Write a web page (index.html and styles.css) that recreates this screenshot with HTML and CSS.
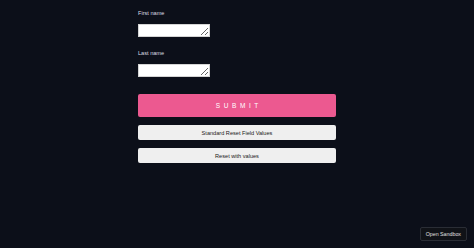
FILE: index.html
```html
<!DOCTYPE html>
<html>
<head>
<meta charset="utf-8">
<link rel="stylesheet" href="styles.css">
</head>
<body>
<div class="page">
  <form class="form">
    <label class="field">
      <span class="label">First name</span>
      <textarea class="input"></textarea>
    </label>
    <label class="field">
      <span class="label">Last name</span>
      <textarea class="input"></textarea>
    </label>
    <button type="button" class="submit">SUBMIT</button>
    <button type="button" class="btn">Standard Reset Field Values</button>
    <button type="button" class="btn">Reset with values</button>
  </form>
</div>
<button type="button" class="sandbox">Open Sandbox</button>
</body>
</html>
```
FILE: styles.css
```css
html, body {
  margin: 0;
  padding: 0;
  background: #0c0f19;
  width: 474px;
  height: 248px;
  overflow: hidden;
  font-family: "Liberation Sans", Arial, sans-serif;
}
.page {
  display: flex;
  justify-content: flex-start;
  padding-left: 138px;
}
.form {
  width: 198px;
  display: flex;
  flex-direction: column;
  padding-top: 9px;
}
.field {
  display: flex;
  flex-direction: column;
  align-items: flex-start;
}
.label {
  color: #dcdce2;
  font-size: 5.6px;
  line-height: 8px;
  margin-bottom: 7px;
}
.input {
  width: 72px;
  height: 13px;
  box-sizing: border-box;
  margin: 0 0 12px 0;
  padding: 0;
  border: 1px solid #d4d4d4;
  background: #fff;
  font-size: 6px;
}
.submit {
  margin-top: 5px;
  height: 23px;
  border: none;
  border-radius: 2px;
  background: #ec5990;
  color: #fff;
  font-family: inherit;
  font-size: 6.5px;
  letter-spacing: 3.6px;
  padding: 0 0 0 3.6px;
  cursor: pointer;
}
.btn {
  margin-top: 8px;
  height: 15px;
  border: none;
  border-radius: 2px;
  background: #efefef;
  color: #1a1a1a;
  font-family: inherit;
  font-size: 5.6px;
  padding: 0;
}
.sandbox {
  position: absolute;
  right: 7px;
  bottom: 7px;
  height: 14px;
  padding: 0 5px;
  background: #101217;
  border: 1px solid #2a2d35;
  border-radius: 2px;
  color: #e0e0e0;
  font-family: inherit;
  font-size: 5.3px;
}
```
